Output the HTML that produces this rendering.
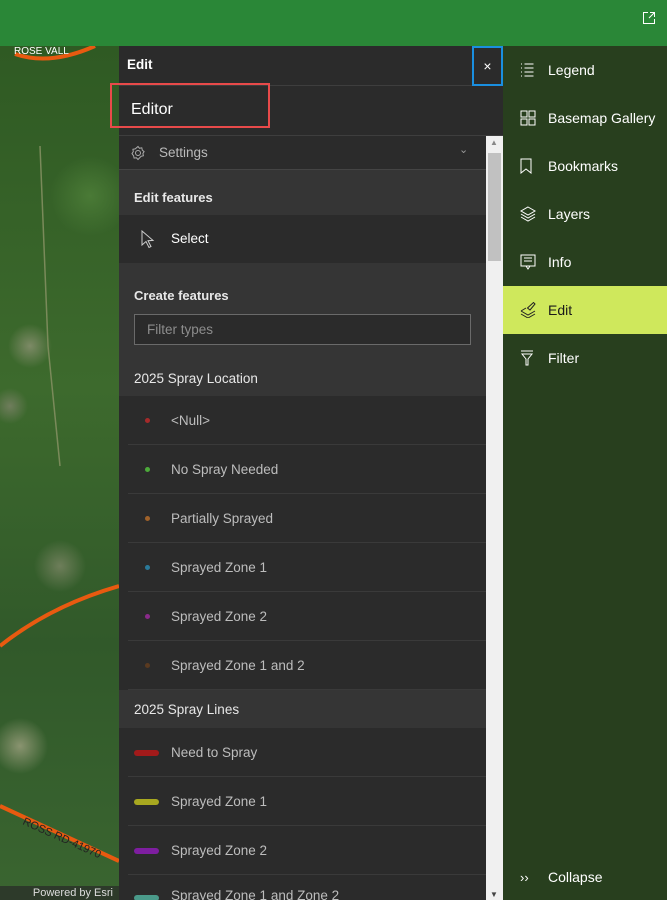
<!DOCTYPE html>
<html><head><meta charset="utf-8"><style>
*{margin:0;padding:0;box-sizing:border-box}
html,body{width:667px;height:900px;overflow:hidden}
body{font-family:"Liberation Sans",sans-serif;position:relative;background:#2b2b2b}
.hdr{position:absolute;left:0;top:0;width:667px;height:46px;background:#2a8737}
.map{position:absolute;left:0;top:46px;width:119px;height:854px;overflow:hidden;background:
radial-gradient(circle at 30px 300px,#7d8a66 0,transparent 22px),
radial-gradient(circle at 60px 520px,#6e7e5a 0,transparent 26px),
radial-gradient(circle at 20px 700px,#8a9470 0,transparent 28px),
radial-gradient(circle at 10px 360px,#6f7d5c 0,transparent 18px),
radial-gradient(circle at 90px 150px,#4a7a36 0,transparent 40px),
linear-gradient(180deg,#2f5a23,#3d6a2d 40%,#31592a 70%,#3a6530)}
.panel{position:absolute;left:119px;top:46px;width:384px;height:854px;background:#2b2b2b;color:#fff;overflow:hidden}
.nav{position:absolute;left:503px;top:46px;width:164px;height:854px;background:#283f1e;color:#fff;font-size:14px}
.nav .it{position:absolute;left:0;width:164px;height:48px;display:flex;align-items:center}
.nav .it span{position:absolute;left:45px}
.nav svg{position:absolute;left:17px}
.row{position:absolute;left:0;width:367px}
.sb{position:absolute;left:367px;top:90px;width:17px;height:764px;background:#f0f0f0}
.item{position:absolute;left:0;width:367px;height:49px;display:flex;align-items:center;font-size:13.5px;color:#bdbdbd}
.item .t{position:absolute;left:52px}
.item:after{content:"";position:absolute;left:9px;right:0;bottom:0;height:1px;background:#3a3a3a}
.dot{position:absolute;left:26px;width:5px;height:5px;border-radius:50%}
.ln{position:absolute;left:15px;width:25px;height:6px;border-radius:3px}
.sec{position:absolute;left:0;width:367px;background:#353535;font-size:13.5px;color:#e8e8e8}
</style></head><body>
<div class="hdr"><svg style="position:absolute;left:642px;top:11px" width="14" height="14" viewBox="0 0 14 14" fill="none" stroke="#fff" stroke-width="1"><path d="M6 1.5H1.5v11h11V8"/><path d="M8 1.5h4.5V6M12.5 1.5L7 7"/></svg></div>
<div class="map">
<svg width="119" height="854" style="position:absolute;left:0;top:0">
<path d="M15 8 Q50 20 95 0" stroke="#e85a10" stroke-width="4" fill="none"/>
<text x="14" y="8" font-size="10" fill="#fff" font-family="Liberation Sans">ROSE VALL</text>
<path d="M0 600 Q50 560 119 540" stroke="#e85a10" stroke-width="4" fill="none"/>
<path d="M0 760 L119 815" stroke="#e85a10" stroke-width="4" fill="none"/>
<path d="M40 100 L48 300 L60 420" stroke="#7a8a5a" stroke-width="1.5" fill="none"/>
<text x="22" y="778" font-size="11" fill="#222" font-family="Liberation Sans" transform="rotate(24 22 778)">ROSS RD-41970</text>
</svg>
<div style="position:absolute;left:0;bottom:0;width:119px;height:14px;background:rgba(40,40,40,.7);color:#ddd;font-size:11px;text-align:right;padding-right:6px;line-height:14px">Powered by Esri</div>
</div>
<div class="panel">
<div class="row" style="top:0;height:40px;width:384px;border-bottom:1px solid #3e3e3e"><span style="position:absolute;left:8px;top:11px;font-size:13.5px;font-weight:bold">Edit</span>
<div style="position:absolute;left:353px;top:0;width:31px;height:40px;border:2px solid #1a8fe0;color:#fff;text-align:center;line-height:36px;font-size:14px">×</div></div>
<div class="row" style="top:40px;height:50px;width:384px;border-bottom:1px solid #3e3e3e"><span style="position:absolute;left:12px;top:15px;font-size:16px">Editor</span></div>
<div class="row" style="top:90px;height:34px;border-bottom:1px solid #444"><svg style="position:absolute;left:11px;top:9px" width="16" height="16" viewBox="0 0 16 16" fill="none" stroke="#aaa"><circle cx="8" cy="8" r="2.5"/><path d="M8 1.5l1.5 1.8 2.3-.5.5 2.3 1.8 1.5-1.2 1.9.5 2.3-2.3.5L8 14.5l-1.6-1.7-2.3.3-.5-2.3L2 8.6l1.3-2-.4-2.3 2.3-.4z"/></svg><span style="position:absolute;left:40px;top:9px;font-size:13.5px;color:#bbb">Settings</span><span style="position:absolute;left:340px;top:7px;color:#999;font-size:11px">⌄</span></div>
<div class="sec" style="top:124px;height:45px"><span style="position:absolute;left:15px;top:20px;font-weight:bold;font-size:13px">Edit features</span></div>
<div class="row" style="top:169px;height:48px;background:#2b2b2b"><svg style="position:absolute;left:22px;top:15px" width="14" height="19" viewBox="0 0 14 19" fill="none" stroke="#ccc"><path d="M1 1v14l4-3.5 3 6 2-1-3-5.8 5-.3z"/></svg><span style="position:absolute;left:52px;top:16px;font-size:13.5px">Select</span></div>
<div class="sec" style="top:217px;height:97px"><span style="position:absolute;left:15px;top:25px;font-weight:bold;font-size:13px">Create features</span>
<div style="position:absolute;left:15px;top:51px;width:337px;height:31px;border:1px solid #6a6a6a;background:#2b2b2b;color:#8d8d8d;font-size:13.5px;padding:7px 12px">Filter types</div></div>
<div class="sec" style="top:314px;height:36px;background:#353535"><span style="position:absolute;left:15px;top:11px">2025 Spray Location</span></div>
<div class="item" style="top:350px"><i class="dot" style="background:#a52a2a"></i><span class="t">&lt;Null&gt;</span></div>
<div class="item" style="top:399px"><i class="dot" style="background:#4caa3a"></i><span class="t">No Spray Needed</span></div>
<div class="item" style="top:448px"><i class="dot" style="background:#a0622a"></i><span class="t">Partially Sprayed</span></div>
<div class="item" style="top:497px"><i class="dot" style="background:#2a7a9a"></i><span class="t">Sprayed Zone 1</span></div>
<div class="item" style="top:546px"><i class="dot" style="background:#8a2a8a"></i><span class="t">Sprayed Zone 2</span></div>
<div class="item" style="top:595px"><i class="dot" style="background:#5a3a20"></i><span class="t">Sprayed Zone 1 and 2</span></div>
<div class="sec" style="top:644px;height:38px"><span style="position:absolute;left:15px;top:12px">2025 Spray Lines</span></div>
<div class="item" style="top:682px"><i class="ln" style="background:#a21a1a"></i><span class="t">Need to Spray</span></div>
<div class="item" style="top:731px"><i class="ln" style="background:#a8a820"></i><span class="t">Sprayed Zone 1</span></div>
<div class="item" style="top:780px"><i class="ln" style="background:#7e1ea0"></i><span class="t">Sprayed Zone 2</span></div>
<div class="item" style="top:829px"><i class="ln" style="background:#4a9a8a;top:20px"></i><span class="t" style="top:13px">Sprayed Zone 1 and Zone 2</span></div>
<div class="sb"><div style="position:absolute;left:2px;top:17px;width:13px;height:108px;background:#c1c1c1"></div><span style="position:absolute;left:4px;top:2px;font-size:8px;color:#888">▲</span><span style="position:absolute;left:4px;bottom:1px;font-size:8px;color:#444">▼</span></div>
</div>
<div style="position:absolute;left:110px;top:83px;width:160px;height:45px;border:2px solid #e84a4a"></div>
<div class="nav">
<div class="it" style="top:0"><svg width="14" height="16" viewBox="0 0 14 16" fill="none" stroke="#fff"><path d="M1 2h1M1 6h1M1 10h1M1 14h1M4.5 2h9M4.5 6h9M4.5 10h9M4.5 14h9"/></svg><span>Legend</span></div>
<div class="it" style="top:48px"><svg width="16" height="16" viewBox="0 0 16 16" fill="none" stroke="#fff"><rect x="1" y="1" width="6" height="6"/><rect x="9" y="1" width="6" height="6"/><rect x="1" y="9" width="6" height="6"/><rect x="9" y="9" width="6" height="6"/></svg><span>Basemap Gallery</span></div>
<div class="it" style="top:96px"><svg width="12" height="16" viewBox="0 0 12 16" fill="none" stroke="#fff"><path d="M1 1h10v14l-5-4-5 4z"/></svg><span>Bookmarks</span></div>
<div class="it" style="top:144px"><svg width="16" height="16" viewBox="0 0 16 16" fill="none" stroke="#fff"><path d="M8 1l7 4-7 4-7-4zM1 8l7 4 7-4M1 11l7 4 7-4"/></svg><span>Layers</span></div>
<div class="it" style="top:192px"><svg width="16" height="16" viewBox="0 0 16 16" fill="none" stroke="#fff"><rect x="1" y="1" width="14" height="11"/><path d="M4 4h8M4 7h8M6 12l2 3 2-3"/></svg><span>Info</span></div>
<div class="it" style="top:240px;background:#cfe85c;color:#1a1a1a"><svg width="17" height="16" viewBox="0 0 17 16" fill="none" stroke="#222"><path d="M1 9l7 4 7-4M1 12l7 4 7-4M1 9l5-3M10 8l5-6-1.5-1.5-6 5.5z"/></svg><span>Edit</span></div>
<div class="it" style="top:288px"><svg width="14" height="16" viewBox="0 0 14 16" fill="none" stroke="#fff"><path d="M1 1h12M2 4h10L8 9v6H6V9z"/></svg><span>Filter</span></div>
<div class="it" style="top:807px"><span style="left:17px;font-size:13px">››</span><span>Collapse</span></div>
</div>
</body></html>
